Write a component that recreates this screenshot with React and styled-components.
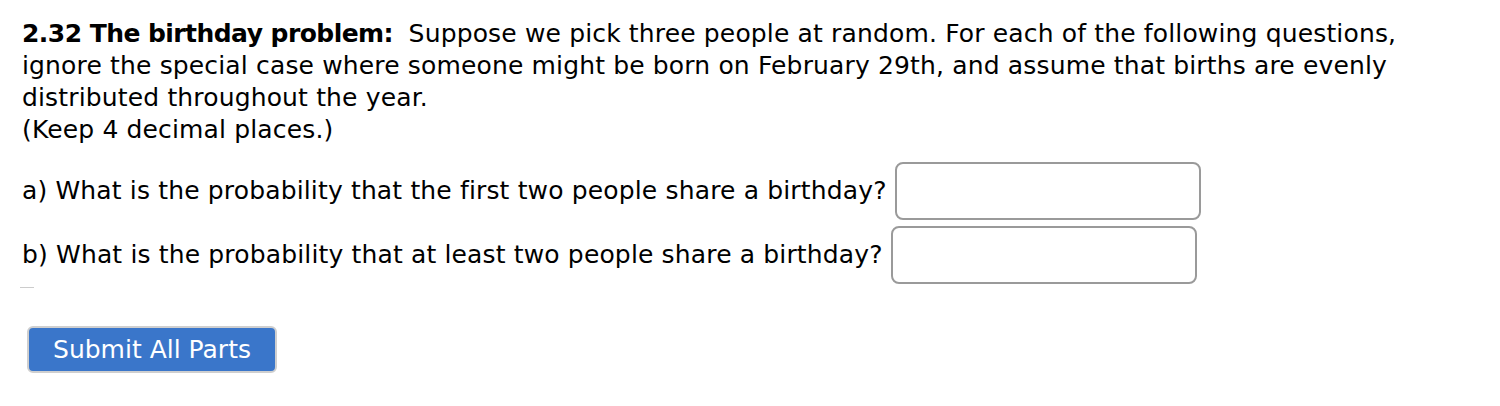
import React from "react";
import styled, { createGlobalStyle } from "styled-components";

const GlobalStyle = createGlobalStyle`
  body {
    margin: 0;
    background: #fff;
    color: #000;
    font-family: "DejaVu Sans", Verdana, sans-serif;
  }
`;

const Page = styled.div`
  padding: 18px 22px 0 22px;
  font-size: 25px;
  letter-spacing: 0.15px;
  line-height: 32px;
`;

const Intro = styled.div`
  white-space: nowrap;
`;

const Bold = styled.b`
  font-weight: bold;
  letter-spacing: -0.55px;
  margin-right: 0.3em;
`;

const Question = styled.div`
  display: flex;
  align-items: center;
  white-space: nowrap;
  margin-top: ${(props) => props.$top}px;
`;

const AnswerBox = styled.input`
  width: 306px;
  height: 58px;
  box-sizing: border-box;
  margin-left: 8px;
  border: 2px solid #9a9a9a;
  border-radius: 8px;
  background: #fff;
  font: inherit;
`;

const Stub = styled.div`
  width: 14px;
  height: 1px;
  margin: 3px 0 0 -2px;
  background: #ccc;
`;

const SubmitButton = styled.button`
  margin: 38px 0 0 5px;
  width: 250px;
  height: 47px;
  background: #3a76ca;
  color: #fff;
  border: 2px solid #cfcfcf;
  border-radius: 6px;
  font: inherit;
  font-size: 25px;
  padding: 0;
`;

export default function App() {
  return (
    <>
      <GlobalStyle />
      <Page>
        <Intro>
          <Bold>2.32 The birthday problem:</Bold> Suppose we pick three people at
          random. For each of the following questions,
          <br />
          ignore the special case where someone might be born on February 29th,
          and assume that births are evenly
          <br />
          distributed throughout the year.
          <br />
          (Keep 4 decimal places.)
        </Intro>
        <Question $top={16}>
          a) What is the probability that the first two people share a birthday?
          <AnswerBox type="text" />
        </Question>
        <Question $top={6}>
          b) What is the probability that at least two people share a birthday?
          <AnswerBox type="text" />
        </Question>
        <Stub />
        <SubmitButton>Submit All Parts</SubmitButton>
      </Page>
    </>
  );
}
